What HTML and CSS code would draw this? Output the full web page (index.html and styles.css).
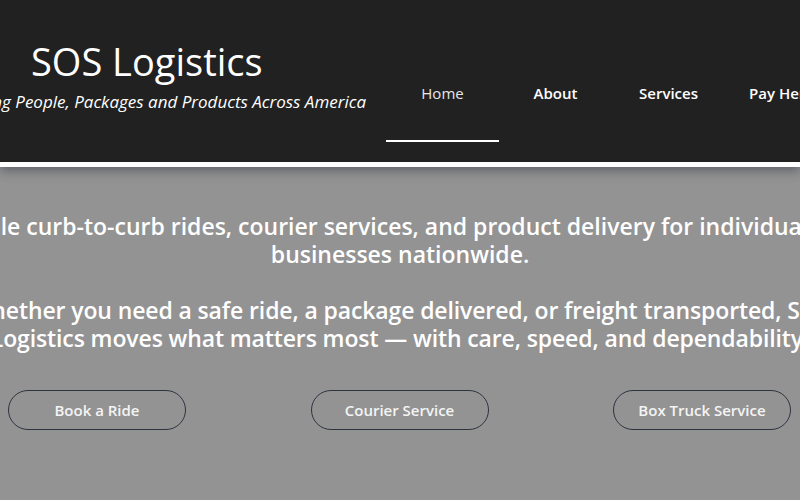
FILE: index.html
```html
<!DOCTYPE html>
<html lang="en">
<head>
<meta charset="utf-8">
<title>SOS Logistics</title>
<link rel="stylesheet" href="styles.css">
</head>
<body>
<header class="site-header">
  <div class="brand">
    <h1 class="brand-title">SOS Logistics</h1>
    <div class="brand-tagline"><span>Moving People, Packages and Products Across America</span></div>
  </div>
  <nav class="nav">
    <a class="nav-item nav-item--active" href="#">Home</a>
    <a class="nav-item" href="#">About</a>
    <a class="nav-item" href="#">Services</a>
    <a class="nav-item" href="#">Pay Here</a>
  </nav>
</header>
<main class="hero">
  <div class="hero-text">
    <p>Reliable curb-to-curb rides, courier services, and product delivery for individuals and<br>businesses nationwide.</p>
    <p class="spacer">&nbsp;</p>
    <p class="tight">Whether you need a safe ride, a package delivered, or freight transported, SOS<br>Logistics moves what matters most — with care, speed, and dependability.</p>
  </div>
  <div class="actions">
    <a class="btn" href="#">Book a Ride</a>
    <a class="btn" href="#">Courier Service</a>
    <a class="btn" href="#">Box Truck Service</a>
  </div>
</main>
</body>
</html>
```

FILE: styles.css
```css
html, body {
  margin: 0;
  padding: 0;
}
body {
  width: 800px;
  height: 500px;
  overflow: hidden;
  background: #939393;
  font-family: "Open Sans", "Noto Sans", sans-serif;
  color: #fff;
}
.site-header {
  position: relative;
  z-index: 1;
  height: 162px;
  background: #212121;
  border-bottom: 5px solid #ffffff;
  box-shadow: 0 4px 10px rgba(40, 45, 60, 0.45);
  display: flex;
}
.brand {
  width: 386px;
  flex: none;
}
.brand-title {
  margin: 0;
  padding: 36px 0 0 31px;
  font-size: 38px;
  font-weight: 400;
  line-height: 50px;
  color: #fff;
  white-space: nowrap;
}
.brand-tagline {
  width: 366px;
  display: flex;
  justify-content: flex-end;
  margin-top: 4px;
  font-size: 17px;
  font-style: italic;
  line-height: 24px;
  white-space: nowrap;
}
.brand-tagline span {
  flex: none;
}
.nav {
  display: flex;
  flex: none;
}
.nav-item {
  width: 113px;
  flex: none;
  box-sizing: border-box;
  height: 142px;
  padding-top: 82px;
  text-align: center;
  font-size: 15px;
  font-weight: 600;
  line-height: 22px;
  color: #fff;
  text-decoration: none;
  white-space: nowrap;
}
.nav-item--active {
  font-weight: 400;
  color: #e6e6e6;
  border-bottom: 2px solid #fff;
}
.hero {
  padding-top: 45px;
}
.hero-text {
  width: 1000px;
  margin-left: -100px;
  text-align: center;
  font-size: 23px;
  line-height: 28px;
  font-weight: 600;
  color: #fff;
}
.hero-text p {
  margin: 0;
  white-space: nowrap;
}
.hero-text .tight {
  letter-spacing: -0.12px;
}
.actions {
  display: flex;
  justify-content: space-between;
  margin: 38px 9px 0 8px;
}
.btn {
  box-sizing: border-box;
  width: 178px;
  height: 40px;
  border: 1px solid #2e3340;
  border-radius: 20px;
  display: flex;
  align-items: center;
  justify-content: center;
  font-size: 15px;
  font-weight: 600;
  color: #f4f4f4;
  text-decoration: none;
}
```
